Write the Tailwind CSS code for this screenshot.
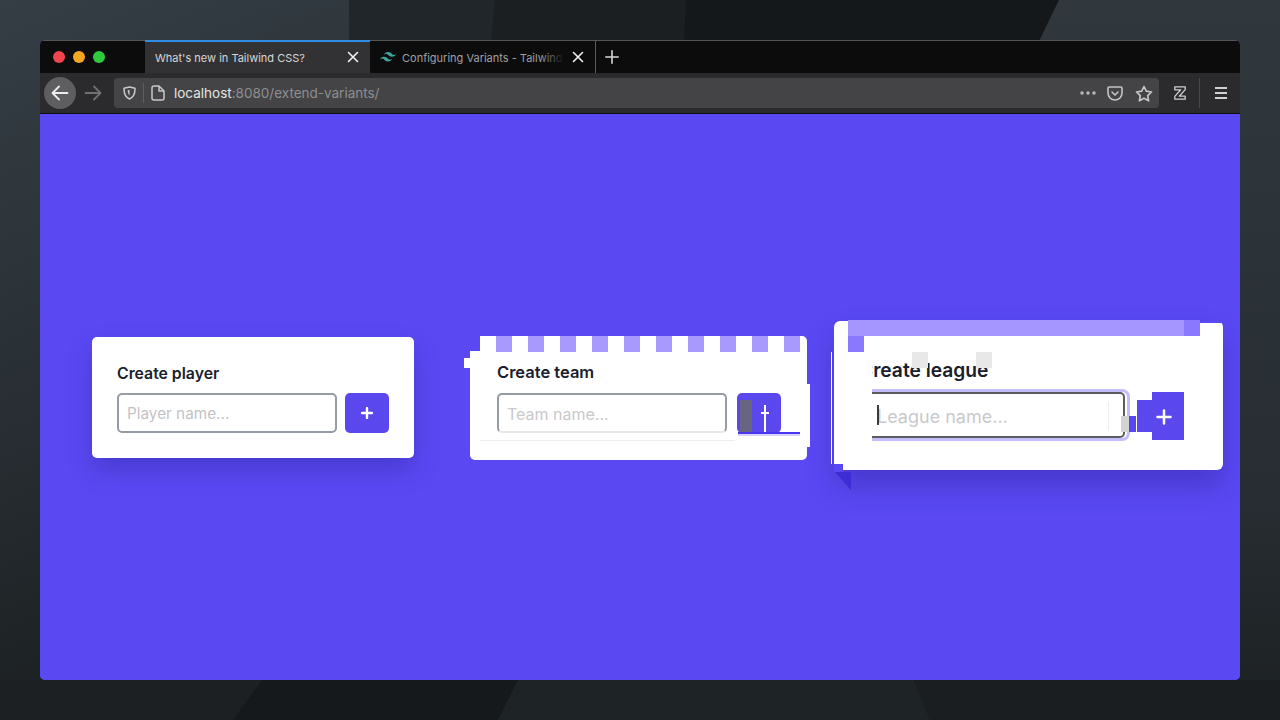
<!doctype html>
<html lang="en">

<head>
  <meta charset="UTF-8" />
  <title>What's new in Tailwind CSS?</title>
  <script src="https://cdn.jsdelivr.net/npm/@tailwindcss/browser@4"></script>
</head>

<body class="relative w-[1280px] h-[720px] overflow-hidden bg-[#1b1f21] font-['Inter',sans-serif]">

  <!-- desktop wallpaper -->
  <svg class="absolute inset-0" width="1280" height="720" viewBox="0 0 1280 720">
    <defs>
      <linearGradient id="wall-left" x1="0" y1="0" x2="0.2" y2="1">
        <stop offset="0" stop-color="#353e45" />
        <stop offset="0.6" stop-color="#272d32" />
        <stop offset="1" stop-color="#1b1f21" />
      </linearGradient>
      <linearGradient id="wall-right" x1="0" y1="0" x2="0" y2="1">
        <stop offset="0" stop-color="#30383e" />
        <stop offset="0.7" stop-color="#272d32" />
        <stop offset="1" stop-color="#1c2022" />
      </linearGradient>
    </defs>
    <rect width="1280" height="720" fill="#1b1f21" />
    <polygon points="0,0 349,0 351,60 351,720 0,720" fill="url(#wall-left)" />
    <polygon points="349,0 495,0 489,60 489,720 351,720" fill="#20262a" />
    <polygon points="686,0 1059,0 1030,60 1030,720 649,720" fill="#15181a" />
    <polygon points="1059,0 1280,0 1280,720 914,720 1030,60" fill="url(#wall-right)" />
    <polygon points="262,680 0,680 0,720 233,720" fill="#1c2022" />
    <polygon points="262,680 518,680 498,720 233,720" fill="#16191b" />
    <polygon points="518,680 914,680 930,720 498,720" fill="#1e2326" />
    <polygon points="914,680 1280,680 1280,720 930,720" fill="#1b1e20" />
  </svg>

  <div id="window" class="relative mx-10 mt-10 w-[1200px] h-[640px] rounded-[5px] overflow-hidden flex flex-col bg-[#5a49f3]">

    <!-- tab strip -->
    <div class="flex h-[33px] shrink-0 bg-[#0c0c0d] border-t border-[#55555a]">
      <div class="flex items-center gap-2 w-[105px] pl-[13px]">
        <span class="w-3 h-3 rounded-full bg-[#f0444f]"></span>
        <span class="w-3 h-3 rounded-full bg-[#f5a623]"></span>
        <span class="w-3 h-3 rounded-full bg-[#2fcb3f]"></span>
      </div>
      <div class="relative flex items-center justify-between w-[225px] pl-[10px] pr-[11px] bg-[#323234] text-[#d6d6d8] text-[11px]">
        <div class="absolute -top-px left-0 right-0 h-[2px] bg-[#2f8de4]"></div>
        <span class="mt-[2px]">What's new in Tailwind CSS?</span>
        <svg width="12" height="12" viewBox="0 0 12 12" stroke="#f2f2f2" stroke-width="1.6" stroke-linecap="round">
          <path d="M1.5 1.5l9 9M10.500 1.500l-9 9" />
        </svg>
      </div>
      <div class="flex items-center w-[226px] pl-[10px] pr-[11px] border-r border-[#5a5a5e] text-[#a0a0a3] text-[11px]">
        <svg class="shrink-0" width="16" height="10" viewBox="0 0 16 10" fill="#3fa7a0">
          <path d="M8 0C5.900 0 4.500 1 4 3c.8-1 1.700-1.400 2.800-1.100.6.2 1 .6 1.500 1.100.8.8 1.700 1.700 3.700 1.700 2.100 0 3.500-1 4-3-.8 1-1.700 1.400-2.800 1.100-.6-.2-1-.6-1.500-1.100C10.900.9 10 0 8 0zM4 4.700c-2.100 0-3.500 1-4 3 .8-1 1.700-1.400 2.800-1.100.6.2 1 .6 1.500 1.100C5.100 8.500 6 9.400 8 9.400c2.100 0 3.500-1 4-3-.8 1-1.700 1.400-2.800 1.100-.6-.2-1-.6-1.500-1.100C6.900 5.600 6 4.700 4 4.700z" />
        </svg>
        <div class="relative ml-[6px] mt-[2px] w-[162px] whitespace-nowrap">
          Configuring Variants - Tailwind
          <div class="absolute right-0 top-0 bottom-0 w-6 bg-gradient-to-r from-transparent to-[#0c0c0d]"></div>
        </div>
        <svg class="ml-[8px] shrink-0" width="12" height="12" viewBox="0 0 12 12" stroke="#f2f2f2" stroke-width="1.6" stroke-linecap="round">
          <path d="M1.500 1.500l9 9M10.500 1.500l-9 9" />
        </svg>
      </div>
      <div class="flex items-center pl-[9px]">
        <svg width="14" height="14" viewBox="0 0 14 14" stroke="#d8d8d8" stroke-width="1.600" stroke-linecap="round">
          <path d="M7 .8v12.400M.8 7h12.400" />
        </svg>
      </div>
    </div>

    <!-- nav bar -->
    <div class="flex items-center h-[41px] shrink-0 bg-[#2b2b2d] border-b border-[#0f0f10] pl-1">
      <div class="flex items-center justify-center w-8 h-8 rounded-full bg-[#5e5e60]">
        <svg width="18" height="16" viewBox="0 0 18 16" fill="none" stroke="#ececec" stroke-width="1.800" stroke-linecap="round" stroke-linejoin="round">
          <path d="M16.500 8H1.800M8 1.500L1.500 8 8 14.500" />
        </svg>
      </div>
      <svg class="ml-[8px]" width="18" height="16" viewBox="0 0 18 16" fill="none" stroke="#707072" stroke-width="1.800" stroke-linecap="round" stroke-linejoin="round">
        <path d="M1.500 8h14.700M10 1.500L16.500 8 10 14.500" />
      </svg>
      <div class="flex items-center ml-3 w-[1045px] h-[30px] rounded-[4px] bg-[#444446]">
        <svg class="ml-[9px]" width="13" height="14" viewBox="0 0 13 14" fill="none" stroke="#c8c8c8" stroke-width="1.500" stroke-linejoin="round">
          <path d="M1 2.200L6.500 1 12 2.200c.2 5-1 8.800-5.500 10.800C2 11 .8 7.200 1 2.200z" />
          <path d="M6.500 3.800c-.7 0-1.300.2-1.800.4 0 2.500.5 4 1.800 5z" fill="#c8c8c8" stroke="none" />
        </svg>
        <div class="ml-[7px] w-px h-[20px] bg-[#5e5e60]"></div>
        <svg class="ml-[7px]" width="14" height="16" viewBox="0 0 14 16" fill="none" stroke="#c8c8c8" stroke-width="1.500" stroke-linejoin="round">
          <path d="M3 1h5l5 5v7a2 2 0 0 1-2 2H3a2 2 0 0 1-2-2V3a2 2 0 0 1 2-2z" />
          <path d="M8 1v5h5" />
        </svg>
        <span class="ml-[9px] mt-[1px] text-[13.500px] text-[#e4e4e4] whitespace-nowrap">localhost<span class="text-[#8e8e90]">:8080/extend-variants/</span></span>
        <div class="flex items-center ml-auto pr-[6px] gap-[14px]">
          <svg class="mr-[-3px]" width="16" height="4" viewBox="0 0 16 4" fill="#bdbdbd">
            <circle cx="2" cy="2" r="1.700" /><circle cx="8" cy="2" r="1.700" /><circle cx="14" cy="2" r="1.700" />
          </svg>
          <svg width="16" height="15" viewBox="0 0 16 15" fill="none" stroke="#c4c4c4" stroke-width="1.600" stroke-linecap="round" stroke-linejoin="round">
            <path d="M2.200 1h11.600c.7 0 1.200.5 1.200 1.200V7A7 7 0 0 1 1 7V2.200C1 1.500 1.500 1 2.200 1z" />
            <path d="M5 6l3 3 3-3" />
          </svg>
          <svg class="ml-[-2px]" width="18" height="17" viewBox="0 0 18 17" fill="none" stroke="#c4c4c4" stroke-width="1.700" stroke-linejoin="round">
            <path d="M9 1.500l2.300 4.700 5.200.8-3.800 3.600.9 5.200L9 13.300l-4.600 2.500.9-5.200L1.500 7l5.200-.8z" />
          </svg>
        </div>
      </div>
      <svg class="ml-[15px]" width="12" height="14" viewBox="0 0 12 14" fill="none" stroke="#d0d0d0" stroke-width="1.300" stroke-linejoin="round">
        <path d="M.8.800h10.400v2.800L5.300 10.200h5.900v3H.8v-2.800L6.700 3.800H.8z" />
      </svg>
      <div class="ml-[13px] w-px h-[30px] bg-[#48484a]"></div>
      <div class="ml-[15px] flex flex-col gap-[3px]">
        <span class="block w-3 h-[2px] bg-[#d0d0d0]"></span>
        <span class="block w-3 h-[2px] bg-[#d0d0d0]"></span>
        <span class="block w-3 h-[2px] bg-[#d0d0d0]"></span>
      </div>
    </div>

    <!-- page -->
    <div class="relative flex-1 flex items-center pl-[52px] bg-[#5a49f3]">

      <!-- player card -->
      <div class="w-[322px] h-[121px] shrink-0 rounded-[5px] bg-white px-[25px] pt-[25px] shadow-[0_12px_24px_rgba(30,20,120,0.28)]">
        <h2 class="text-[15.800px] leading-[24px] font-semibold text-[#1a202c]">Create player</h2>
        <div class="flex gap-2 mt-[7px]">
          <div class="flex items-center w-[221px] h-[40px] border-2 border-[#959ca5] rounded-[5px] pl-[8px] pt-[3px] text-[15.300px] text-[#c3c3c6]">Player name...</div>
          <button class="flex items-center justify-center w-[44px] h-[40px] rounded-[5px] bg-[#5a48ee]">
            <svg width="12" height="12" viewBox="0 0 12 12" stroke="#fff" stroke-width="2.400" stroke-linecap="round"><path d="M6 1v10M1 6h10" /></svg>
          </button>
        </div>
      </div>

      <!-- team card, caught mid-frame -->
      <div class="relative ml-14 mt-[1px] w-[337px] h-[124px] shrink-0 rounded-[5px] bg-white pl-[27px] pt-[24px]">
        <h2 class="text-[16.500px] leading-[24px] font-semibold text-[#1a202c]">Create team</h2>
        <div class="flex gap-[10px] mt-[9px]">
          <div class="flex items-center w-[230px] h-[40px] border-2 border-[#959ca5] border-b-[#e8e8ea] rounded-[5px] pl-[8px] pt-[3px] text-[16px] text-[#c9c9cc]">Team name...</div>
          <div class="relative w-[44px] h-[40px] rounded-[5px] bg-[#5a48ee]">
            <div class="absolute left-[3px] top-[7px] w-3 h-8 bg-[#686580]"></div>
            <div class="absolute left-[27px] top-[12px] w-[2px] h-[27px] bg-white"></div>
            <div class="absolute left-[24px] top-[19px] w-2 h-[2px] bg-white"></div>
          </div>
        </div>
        <!-- glitch blocks -->
        <div class="absolute -left-px -top-px w-[11px] h-4 bg-[#5a49f3]"></div>
        <div class="absolute top-0 left-[26px] w-4 h-4 bg-[#a899ff]"></div>
        <div class="absolute top-0 left-[58px] w-4 h-4 bg-[#a899ff]"></div>
        <div class="absolute top-0 left-[90px] w-4 h-4 bg-[#a899ff]"></div>
        <div class="absolute top-0 left-[122px] w-4 h-4 bg-[#a899ff]"></div>
        <div class="absolute top-0 left-[154px] w-4 h-4 bg-[#a899ff]"></div>
        <div class="absolute top-0 left-[186px] w-4 h-4 bg-[#a899ff]"></div>
        <div class="absolute top-0 left-[218px] w-4 h-4 bg-[#a899ff]"></div>
        <div class="absolute top-0 left-[250px] w-4 h-4 bg-[#a899ff]"></div>
        <div class="absolute top-0 left-[282px] w-4 h-4 bg-[#a899ff]"></div>
        <div class="absolute top-0 left-[314px] w-4 h-4 bg-[#a899ff]"></div>
        <div class="absolute -left-[6px] top-[22px] w-2 h-[10px] bg-white"></div>
        <div class="absolute left-[268px] top-[96px] w-[62px] h-[2px] bg-[#4a36ee]"></div>
        <div class="absolute left-[268px] top-[98px] w-[62px] h-[2px] bg-[#d8d4fb]"></div>
        <div class="absolute left-[10px] top-[104px] w-[255px] h-px bg-[#eeeeef]"></div>
        <div class="absolute -right-[3px] top-[48px] w-[3px] h-[63px] bg-white"></div>
      </div>

      <!-- league card, caught mid-frame -->
      <div class="relative ml-[27px] -mt-[3px] w-[389px] h-[149px] shrink-0 rounded-[6px] bg-white pl-[25px] pt-[36px] shadow-[0_16px_28px_rgba(30,20,120,0.3)]">
        <h2 class="text-[19.200px] leading-[26px] font-semibold text-[#1a202c]">Create league</h2>
        <div class="relative mt-[6px] w-[258px] h-[52px] ml-[13px] rounded-r-[8px] border-[3px] border-l-0 border-[#c4bdfb] bg-white">
          <div class="absolute top-0 left-0 right-[2px] bottom-0 rounded-r-[5px] border-y-2 border-r-2 border-[#5c5c60] flex items-center pl-[5px] pt-[2px] text-[18px] text-[#c9c9cc]">League name...</div>
          <div class="absolute left-[5px] top-[13px] w-[2px] h-[20px] bg-[#3a3a3d]"></div>
          <div class="absolute left-[236px] top-[10px] w-px h-[28px] bg-[#eeeeef]"></div>
        </div>
        <!-- broken button blocks -->
        <div class="absolute left-[303px] top-[71px] w-[47px] h-[48px] overflow-hidden">
          <div class="absolute left-[15px] top-0 w-8 h-12 bg-[#5a48ee]"></div>
          <div class="absolute left-0 top-2 w-[15px] h-8 bg-[#5a48ee]"></div>
          <svg class="absolute left-[19px] top-[17px]" width="16" height="16" viewBox="0 0 16 16" stroke="#fff" stroke-width="2.500" stroke-linecap="round"><path d="M8 1.500v13M1.500 8h13" /></svg>
        </div>
        <div class="absolute left-[287px] top-[95px] w-2 h-4 bg-[#d4d4d4]"></div>
        <div class="absolute left-[295px] top-[95px] w-[7px] h-4 bg-[#5a48ee]"></div>
        <!-- glitch blocks -->
        <div class="absolute left-[14px] -top-px w-[352px] h-4 bg-[#a596ff]"></div>
        <div class="absolute left-[350px] -top-px w-4 h-4 bg-[#8a78ff]"></div>
        <div class="absolute right-0 top-0 w-[23px] h-[2px] bg-[#5a49f3]"></div>
        <div class="absolute left-[14px] top-[15px] w-4 h-4 bg-[#8a78ff]"></div>
        <div class="absolute left-[38px] top-[31px] w-[125px] h-[10px] bg-white"></div>
        <div class="absolute left-[78px] top-[31px] w-4 h-4 bg-[#e8e8e8]"></div>
        <div class="absolute left-[142px] top-[31px] w-4 h-4 bg-[#e8e8e8]"></div>
        <div class="absolute left-[22px] top-[31px] w-[16px] h-[30px] bg-white"></div>
        <div class="absolute -left-[3px] top-[31px] w-px h-[112px] bg-white"></div>
        <div class="absolute left-0 top-[143px] w-[9px] h-[8px] bg-[#5a49f3]"></div>
      </div>

      <svg class="absolute left-[795px] top-[358px]" width="16" height="18" viewBox="0 0 16 18" fill="#3d2cd6">
        <path d="M0 0h10l6-1v19z" />
      </svg>
    </div>
  </div>
</body>

</html>
